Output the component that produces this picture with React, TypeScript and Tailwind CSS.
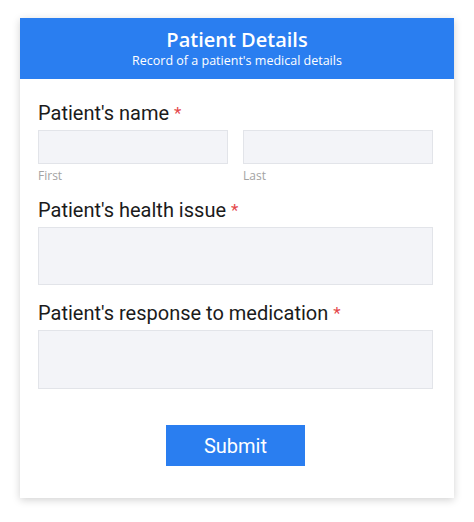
import React from "react";

const Label = ({ text }: { text: string }) => (
  <div
    className="text-[20px] leading-[22px] text-[#1b1b1b]"
    style={{ fontFamily: "Roboto, 'Liberation Sans', sans-serif" }}
  >
    {text} <span className="text-[17px] align-top text-[#e4474b]">*</span>
  </div>
);

export default function App() {
  return (
    <div
      className="w-[474px] h-[522px] bg-white pt-[18px] pl-[20px]"
      style={{ fontFamily: "'Open Sans', 'Liberation Sans', sans-serif" }}
    >
      <div className="w-[434px] h-[480px] bg-white shadow-[0_2px_8px_rgba(0,0,0,0.18)]">
        {/* Header */}
        <div className="h-[61px] bg-[#2a7ef0] flex flex-col items-center justify-center text-white">
          <div className="text-[20px] leading-[24px] font-semibold">Patient Details</div>
          <div className="text-[12.5px] leading-[16px] mt-[1px]">Record of a patient's medical details</div>
        </div>

        {/* Body */}
        <div className="pl-[18px] pr-[21px] pt-[23px]">
          <Label text="Patient's name" />
          <div className="grid grid-cols-2 gap-[15px] mt-[6px]">
            <div>
              <div className="h-[34px] bg-[#f3f4f8] border border-[#e2e4e9]" />
              <div className="text-[12px] leading-[16px] text-[#a3a3a3] mt-[4px]">First</div>
            </div>
            <div>
              <div className="h-[34px] bg-[#f3f4f8] border border-[#e2e4e9]" />
              <div className="text-[12px] leading-[16px] text-[#a3a3a3] mt-[4px]">Last</div>
            </div>
          </div>

          <div className="mt-[15px]">
            <Label text="Patient's health issue" />
          </div>
          <div className="h-[58px] mt-[6px] bg-[#f3f4f8] border border-[#e2e4e9]" />

          <div className="mt-[17px]">
            <Label text="Patient's response to medication" />
          </div>
          <div className="h-[59px] mt-[6px] bg-[#f3f4f8] border border-[#e2e4e9]" />

          <div className="flex justify-center mt-[36px]">
            <button
              className="w-[139px] h-[41px] bg-[#2a7ef0] text-white text-[20px]"
              style={{ fontFamily: "Roboto, 'Liberation Sans', sans-serif" }}
            >
              Submit
            </button>
          </div>
        </div>
      </div>
    </div>
  );
}
